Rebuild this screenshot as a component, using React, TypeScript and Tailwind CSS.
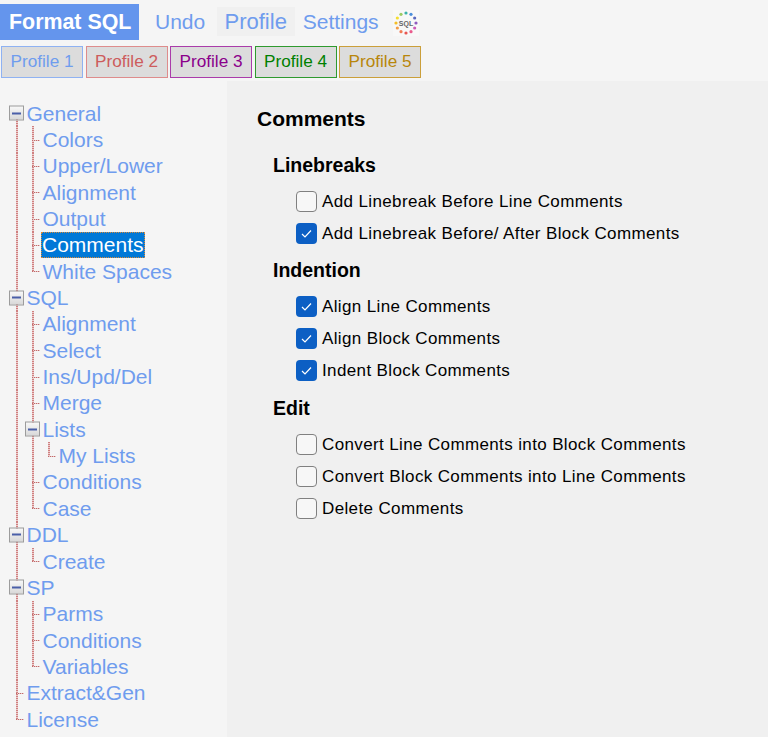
const tree: [string, number, string[], boolean?][] = [
  ["General", 0, ["toggle"]],
  ["Colors", 1, ["line", "tee"]],
  ["Upper/Lower", 1, ["line", "tee"]],
  ["Alignment", 1, ["line", "tee"]],
  ["Output", 1, ["line", "tee"]],
  ["Comments", 1, ["line", "tee"], true],
  ["White Spaces", 1, ["line", "elbow"]],
  ["SQL", 0, ["toggle"]],
  ["Alignment", 1, ["line", "tee"]],
  ["Select", 1, ["line", "tee"]],
  ["Ins/Upd/Del", 1, ["line", "tee"]],
  ["Merge", 1, ["line", "tee"]],
  ["Lists", 1, ["line", "toggle"]],
  ["My Lists", 2, ["line", "line", "elbow"]],
  ["Conditions", 1, ["line", "tee"]],
  ["Case", 1, ["line", "elbow"]],
  ["DDL", 0, ["toggle"]],
  ["Create", 1, ["line", "elbow"]],
  ["SP", 0, ["toggle"]],
  ["Parms", 1, ["line", "tee"]],
  ["Conditions", 1, ["line", "tee"]],
  ["Variables", 1, ["line", "elbow"]],
  ["Extract&Gen", 0, ["tee"]],
  ["License", 0, ["elbow"]],
];

const sections = [
  {
    title: "Linebreaks",
    gap: "mb-[8.5px]",
    items: [
      ["Add Linebreak Before Line Comments", false],
      ["Add Linebreak Before/ After Block Comments", true],
    ],
  },
  {
    title: "Indention",
    gap: "mb-[9.5px]",
    items: [
      ["Align Line Comments", true],
      ["Align Block Comments", true],
      ["Indent Block Comments", true],
    ],
  },
  {
    title: "Edit",
    gap: "mb-0",
    items: [
      ["Convert Line Comments into Block Comments", false],
      ["Convert Block Comments into Line Comments", false],
      ["Delete Comments", false],
    ],
  },
] as { title: string; gap: string; items: [string, boolean][] }[];

const profiles = [
  ["Profile 1", "text-[#6f9cee] border-[#8fb2f2]"],
  ["Profile 2", "text-[#cd5c5c] border-[#de8c8c]"],
  ["Profile 3", "text-[#8b008b] border-[#aa3caa]"],
  ["Profile 4", "text-[#008000] border-[#2f9a2f]"],
  ["Profile 5", "text-[#b8860b] border-[#cb9f3a]"],
];

const V = "w-[2px] bg-[repeating-linear-gradient(to_bottom,#cf8080_0,#cf8080_1px,#eccccc_1px,#eccccc_2px)]";
const H = "h-[1px] bg-[repeating-linear-gradient(to_right,#c06a6a_0,#c06a6a_1px,#e8c4c4_1px,#e8c4c4_2px)]";

function Cell({ kind, first }: { kind: string; first?: boolean }) {
  return (
    <div className="relative w-4 h-full shrink-0">
      {kind === "line" && <div className={`absolute left-2 top-0 bottom-0 ${V}`} />}
      {kind === "tee" && (
        <>
          <div className={`absolute left-2 top-0 bottom-0 ${V}`} />
          <div className={`absolute left-2 right-0 top-1/2 ${H}`} />
        </>
      )}
      {kind === "elbow" && (
        <>
          <div className={`absolute left-2 top-0 h-1/2 ${V}`} />
          <div className={`absolute left-2 right-0 top-1/2 ${H}`} />
        </>
      )}
      {kind === "toggle" && (
        <>
          {!first && <div className={`absolute left-2 top-0 bottom-0 ${V}`} />}
          {first && <div className={`absolute left-2 top-1/2 bottom-0 ${V}`} />}
          <div className="absolute left-[1px] top-1/2 -translate-y-1/2 w-[15px] h-[15px] bg-gradient-to-b from-[#f8f8f8] to-[#d8d8d8] border border-[#9c9c9c] flex items-center justify-center">
            <div className="w-[9px] h-[2px] bg-[#4a5fa8]" />
          </div>
        </>
      )}
    </div>
  );
}

function Logo() {
  const colors = ["#1aa79c", "#2e7dd7", "#3f51b5", "#7b3fb5", "#c43fae", "#e8407a", "#e53935", "#f0653a", "#f28c28", "#f4b400", "#f5d90a", "#8bc34a"];
  return (
    <svg width="26" height="26" viewBox="0 0 26 26" className="block">
      <rect width="26" height="26" fill="#f8f8f8" />
      {colors.map((c, i) => {
        const a = (i / 12) * Math.PI * 2 - Math.PI / 2;
        return <circle key={i} cx={13 + 10 * Math.cos(a)} cy={13 + 10 * Math.sin(a)} r="1.6" fill={c} opacity="0.85" />;
      })}
      <text x="13" y="15.5" textAnchor="middle" fontSize="7" fontWeight="700" fill="#666" fontFamily="'Liberation Sans', sans-serif">SQL</text>
    </svg>
  );
}

export default function App() {
  return (
    <div className="w-[768px] h-[737px] overflow-hidden bg-[#f5f5f5] font-['Liberation_Sans',Arial,sans-serif] flex flex-col">
      <div className="flex items-start h-[46px] pt-1 shrink-0">
        <div className="w-[139px] h-9 bg-[#6495ed] text-white text-[21.4px] font-bold flex items-center pl-[9px] whitespace-nowrap">Format SQL</div>
        <div className="ml-[16px] h-9 flex items-center text-[21px] text-[#6f9cee]">Undo</div>
        <div className="ml-[12px] mt-[3px] w-[78px] h-[29px] bg-[#f0f0f0] flex items-center justify-center text-[22px] text-[#6f9cee] pr-[1px]">Profile</div>
        <div className="ml-[7.5px] h-9 flex items-center text-[21px] text-[#6f9cee]">Settings</div>
        <div className="ml-[14px] mt-[6px]"><Logo /></div>
      </div>
      <div className="flex gap-[2.5px] pl-[1px] h-[35px] shrink-0">
        {profiles.map(([t, c]) => (
          <div key={t} className={`w-[82px] h-8 bg-[#dcdcdc] border flex items-center justify-center text-[17.2px] whitespace-nowrap ${c}`}>{t}</div>
        ))}
      </div>
      <div className="flex flex-1 min-h-0">
        <div className="w-[227px] shrink-0 pt-[19px] pl-2">
          {tree.map(([label, , cells, sel], i) => (
            <div key={i} className="flex items-center h-[26.35px]">
              {cells.map((k, j) => (
                <Cell key={j} kind={k} first={i === 0} />
              ))}
              {sel ? (
                <span className="ml-[0.5px] px-[1.5px] h-[26px] flex items-center bg-[#0078d7] text-white text-[21px] leading-none whitespace-nowrap outline-1 outline-dotted -outline-offset-1 outline-[#d98a3a]">{label}</span>
              ) : (
                <span className="ml-[2.5px] text-[21px] leading-none whitespace-nowrap text-[#6f9cee]">{label}</span>
              )}
            </div>
          ))}
        </div>
        <div className="flex-1 bg-[#f0f0f0] pl-[30px] pt-[26px]">
          <h1 className="text-[21px] font-bold text-black leading-[24px]">Comments</h1>
          <div className="pl-[16px] pt-[22px]">
            {sections.map((s) => (
              <div key={s.title} className={s.gap}>
                <h2 className="text-[19.5px] font-bold text-black leading-[24px] mb-[8.5px]">{s.title}</h2>
                <div className="pl-[23px]">
                  {s.items.map(([text, checked]) => (
                    <div key={text} className="flex items-center h-8 gap-[5px]">
                      <div className={`w-[21px] h-[21px] rounded-[4px] flex items-center justify-center ${checked ? "bg-[#0c5fc4]" : "bg-[#f7f7f7] border-[1.5px] border-[#808080]"}`}>
                        {checked && (
                          <svg width="13" height="13" viewBox="0 0 13 13" fill="none" stroke="white" strokeWidth="1.2">
                            <path d="M2 7 L5 10 L11 3.5" />
                          </svg>
                        )}
                      </div>
                      <span className="text-[17px] tracking-[0.37px] text-black whitespace-nowrap">{text}</span>
                    </div>
                  ))}
                </div>
              </div>
            ))}
          </div>
        </div>
      </div>
    </div>
  );
}
